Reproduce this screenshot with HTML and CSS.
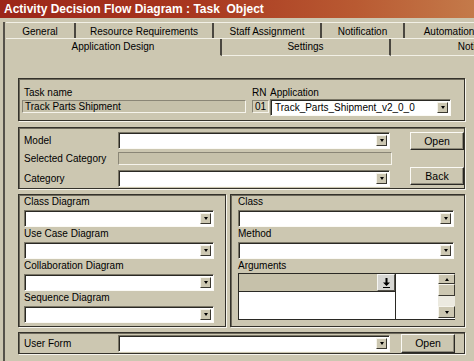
FILE: index.html
```html
<!DOCTYPE html>
<html>
<head>
<meta charset="utf-8">
<link rel="stylesheet" href="styles.css">
</head>
<body>
<div class="title">Activity Decision Flow Diagram : Task&nbsp; Object</div>
<div class="frame">
  <div class="tabs">
    <div class="tabrow r1">
      <div class="tab w70">General</div>
      <div class="tab w138">Resource Requirements</div>
      <div class="tab w108">Staff Assignment</div>
      <div class="tab w83">Notification</div>
      <div class="tab w90">Automation</div>
    </div>
    <div class="tabrow r2">
      <div class="tab sel w216">Application Design</div>
      <div class="tab w169">Settings</div>
      <div class="tab w190">Notifications</div>
    </div>
  </div>
  <div class="panel">
    <div class="group g1">
      <div class="col c-task">
        <div class="lbl">Task name</div>
        <div class="field w224">Track Parts Shipment</div>
      </div>
      <div class="col c-rn">
        <div class="lbl">RN</div>
        <div class="field num">01</div>
      </div>
      <div class="col">
        <div class="lbl">Application</div>
        <div class="combo w180"><span class="val">Track_Parts_Shipment_v2_0_0</span><span class="dd"></span></div>
      </div>
    </div>

    <div class="group g2">
      <div class="rows">
        <div class="row"><span class="rl">Model</span><div class="combo w272"><span class="val"></span><span class="dd"></span></div></div>
        <div class="row r-sel"><span class="rl">Selected Category</span><div class="field w274"></div></div>
        <div class="row r-cat"><span class="rl">Category</span><div class="combo w272"><span class="val"></span><span class="dd"></span></div></div>
      </div>
      <div class="btns">
        <div class="btn">Open</div>
        <div class="btn">Back</div>
      </div>
    </div>

    <div class="pair">
      <div class="group g3l">
        <div class="lbl2">Class Diagram</div>
        <div class="combo w190"><span class="val"></span><span class="dd"></span></div>
        <div class="lbl2">Use Case Diagram</div>
        <div class="combo w190"><span class="val"></span><span class="dd"></span></div>
        <div class="lbl2">Collaboration Diagram</div>
        <div class="combo w190"><span class="val"></span><span class="dd"></span></div>
        <div class="lbl2">Sequence Diagram</div>
        <div class="combo w190"><span class="val"></span><span class="dd"></span></div>
      </div>
      <div class="group g3r">
        <div class="lbl2">Class</div>
        <div class="combo w216"><span class="val"></span><span class="dd"></span></div>
        <div class="lbl2">Method</div>
        <div class="combo w216"><span class="val"></span><span class="dd"></span></div>
        <div class="lbl2 short">Arguments</div>
        <div class="args">
          <div class="grid">
            <div class="ghead">
              <span class="gbtn"><svg width="9" height="10" viewBox="0 0 9 10"><path d="M3.5 0h2v4.5h2.5L4.5 8 1 4.5h2.5z" fill="#000"/><rect x="1" y="9" width="7" height="1" fill="#000"/></svg></span>
            </div>
            <div class="gbody"></div>
          </div>
          <div class="list">
            <div class="sb">
              <span class="sbtn"><i class="up"></i></span>
              <span class="thumb"></span>
              <span class="track"></span>
              <span class="sbtn"><i class="down"></i></span>
            </div>
          </div>
        </div>
      </div>
    </div>

    <div class="group g4">
      <span class="rl">User Form</span>
      <div class="combo w272"><span class="val"></span><span class="dd"></span></div>
      <div class="btn b4">Open</div>
    </div>
  </div>
</div>
</body>
</html>
```
FILE: styles.css
```css
* { box-sizing: border-box; margin: 0; padding: 0; }
html, body { width: 474px; height: 361px; overflow: hidden; }
body {
  background: #ccc7b1;
  font-family: "Liberation Sans", Arial, sans-serif;
  font-size: 10px;
  color: #000;
}
.title {
  height: 18px;
  line-height: 18px;
  padding-left: 4px;
  color: #fff;
  font-family: "Liberation Sans Narrow", "Liberation Sans", Arial, sans-serif;
  font-weight: bold;
  font-size: 12px;
  white-space: nowrap;
  background: linear-gradient(to right, #9c2619 0%, #a8361f 40%, #b95a32 75%, #c47a4a 100%);
}
.frame {
  margin-top: 4px;
  margin-left: 3px;
  height: 339px;
  border-left: 2px solid #55524a;
  overflow: hidden;
}
.tabs { margin-left: 1px; }
.tabrow { display: flex; white-space: nowrap; }
.r1 { height: 16px; border-top: 1px solid #f2f0e6; }
.r2 { height: 18px; border-top: 1px solid #f2f0e6; }
.tab {
  flex: none;
  text-align: center;
  border-right: 2px solid #4a4740;
}
.r1 .tab { line-height: 17px; }
.r2 .tab { line-height: 16px; border-bottom: 1px solid #f2f0e6; }
.r2 .tab.sel { border-bottom-color: transparent; }
.w70 { width: 70px; }
.w138 { width: 138px; }
.w108 { width: 108px; }
.w83 { width: 83px; }
.w90 { width: 90px; }
.w216 { width: 216px; }
.w169 { width: 169px; }
.w190 { width: 190px; }

.panel { padding: 22px 0 0 13px; }

.group {
  width: 447px;
  border: 1px solid #34322b;
  box-shadow: inset 1px 1px 0 #6e6a5c, 1px 1px 0 #f6f4ec;
}

.lbl { height: 13px; line-height: 13px; white-space: nowrap; }

/* group 1 */
.g1 { height: 43px; display: flex; padding: 7px 0 0 3px; }
.col { display: flex; flex-direction: column; }
.c-task { width: 230px; }
.c-task .lbl { padding-left: 2px; }
.c-task .field { margin-top: 1px; }
.c-rn { width: 18px; }
.c-rn .field { margin-top: 1px; }

.field {
  height: 13px;
  line-height: 11px;
  padding-left: 2px;
  background: #c6c1aa;
  border-top: 1px solid #8a8676;
  border-left: 1px solid #8a8676;
  border-bottom: 1px solid #f6f4ec;
  border-right: 1px solid #f6f4ec;
  white-space: nowrap;
  overflow: hidden;
}
.w224 { width: 224px; }
.w274 { width: 274px; }
.num { width: 17px; padding-left: 2px; background: #d2cdb8; }

.combo {
  display: flex;
  height: 17px;
  padding: 2px;
  background: #fff;
  border-top: 1px solid #7a7666;
  border-left: 1px solid #7a7666;
  border-right: 1px solid #fbfaf5;
  border-bottom: 1px solid #fbfaf5;
  box-shadow: inset 1px 1px 0 #2a2924;
}
.combo .val {
  flex: 1;
  line-height: 12px;
  font-size: 10px;
  padding-left: 2px;
  white-space: nowrap;
}
.dd {
  flex: none;
  width: 11px;
  background: #ccc7b1;
  border: 1px solid;
  border-color: #f6f4ec #3a3830 #3a3830 #f6f4ec;
  display: flex;
  align-items: center;
  justify-content: center;
}
.dd::after {
  content: "";
  border-left: 2px solid transparent;
  border-right: 2px solid transparent;
  border-top: 3px solid #000;
}
.w180 { width: 181px; }
.w272 { width: 272px; }
.w216 { width: 216px; }

/* group 2 */
.g2 {
  height: 62px;
  margin-top: 6px;
  display: flex;
  padding: 4px 0 0 5px;
}
.rows { width: 388px; }
.row { display: flex; align-items: center; }
.rl { width: 94px; flex: none; white-space: nowrap; }
.r-sel { margin-top: 3px; }
.r-cat { margin-top: 5px; }
.btns {
  display: flex;
  flex-direction: column;
  gap: 17px;
  margin-left: 1px;
}
.btn {
  width: 54px;
  height: 18px;
  line-height: 16px;
  text-align: center;
  font-size: 10.5px;
  background: #ccc7b1;
  border: 1px solid;
  border-color: #fbfaf5 #2a2924 #2a2924 #fbfaf5;
  box-shadow: inset -1px -1px 0 #8e8a7a;
}

/* group 3 */
.pair { display: flex; gap: 4px; margin-top: 5px; }
.g3l { width: 208px; height: 133px; padding: 0 0 0 5px; }
.g3r { width: 235px; height: 133px; padding: 0 0 0 7px; }
.lbl2 { height: 15px; line-height: 14px; white-space: nowrap; }
.lbl2.short { height: 14px; }

.args { display: flex; height: 47px; width: 217px; }
.grid {
  width: 158px;
  border: 1px solid #2a2924;
  display: flex;
  flex-direction: column;
}
.ghead {
  height: 18px;
  background: #c6c1aa;
  border-bottom: 1px solid #2a2924;
  display: flex;
  justify-content: flex-end;
}
.gbtn {
  width: 18px;
  height: 17px;
  background: #d6d6d2;
  border: 1px solid;
  border-color: #f6f6f2 #55524a #55524a #f6f6f2;
  display: flex;
  align-items: center;
  justify-content: center;
}
.gbody { flex: 1; background: #fff; }
.list {
  flex: 1;
  background: #fff;
  border-top: 1px solid #2a2924;
  border-bottom: 1px solid #2a2924;
  display: flex;
  justify-content: flex-end;
  padding: 0 0 1px 0;
}
.sb {
  width: 17px;
  display: flex;
  flex-direction: column;
}
.sbtn {
  height: 10px;
  background: #ccc7b1;
  border: 1px solid;
  border-color: #f6f4ec #3a3830 #3a3830 #f6f4ec;
  display: flex;
  align-items: center;
  justify-content: center;
}
.sbtn:last-child { height: 12px; }
.sbtn i { display: block; border-left: 2px solid transparent; border-right: 2px solid transparent; }
.sbtn .up { border-bottom: 3px solid #000; }
.sbtn .down { border-top: 3px solid #000; }
.thumb {
  height: 12px;
  background: #ccc7b1;
  border: 1px solid;
  border-color: #f6f4ec #3a3830 #3a3830 #f6f4ec;
}
.track { flex: 1; background: #eceae0; }

/* group 4 */
.g4 {
  height: 22px;
  margin-top: 5px;
  display: flex;
  align-items: center;
  padding-left: 5px;
}
.b4 { margin-left: 11px; height: 19px; }
```
